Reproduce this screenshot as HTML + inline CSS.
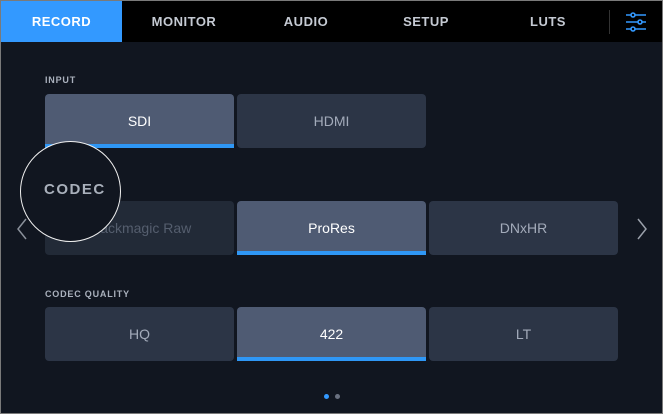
<!DOCTYPE html>
<html><head><style>
*{margin:0;padding:0;box-sizing:border-box}
body{width:663px;height:414px;background:#7a7a7a;font-family:"Liberation Sans",sans-serif;overflow:hidden;position:relative}
.scr{position:absolute;left:1px;top:1px;width:661px;height:412px;background:#111620;overflow:hidden}
.tabs{position:absolute;left:0;top:0;width:661px;height:41px;background:#000}
.tab{position:absolute;top:0;height:41px;line-height:42px;text-align:center;color:#c5cad3;font-size:13px;font-weight:bold;letter-spacing:0.5px}
.lbl{position:absolute;left:44px;color:#aab1bd;font-size:9px;font-weight:bold;letter-spacing:0.8px}
.b{position:absolute;height:54px;background:#2c3546;color:#a3abba;font-size:14px;text-align:center;line-height:54px;border-radius:4px}
.s{background:#4f5b73;color:#fff;border-radius:4px 4px 0 0}
.s:after{content:"";position:absolute;left:0;right:0;bottom:0;height:4px;background:#2f97f5}
</style></head><body><div class="scr">
<div class="tabs">
<div class="tab" style="left:0;width:121px;background:#3399ff;color:#fff">RECORD</div>
<div class="tab" style="left:122px;width:122px">MONITOR</div>
<div class="tab" style="left:244px;width:122px">AUDIO</div>
<div class="tab" style="left:364px;width:122px">SETUP</div>
<div class="tab" style="left:486px;width:122px">LUTS</div>
<div style="position:absolute;left:608px;top:9px;width:1px;height:24px;background:#333"></div>
<svg style="position:absolute;left:624px;top:10px" width="22" height="22" viewBox="0 0 22 22" fill="none" stroke="#3399ff" stroke-width="1.6"><path d="M1 4H21M1 11H21M1 18H21"/><circle cx="8" cy="4" r="2" fill="#000"/><circle cx="15" cy="11" r="2" fill="#000"/><circle cx="8" cy="18" r="2" fill="#000"/></svg>
</div>
<div class="lbl" style="top:74px">INPUT</div>
<div class="b s" style="left:44px;top:93px;width:189px">SDI</div>
<div class="b" style="left:236px;top:93px;width:189px">HDMI</div>
<div class="b" style="left:44px;top:200px;width:189px;background:#222a37;color:#555e6e">Blackmagic Raw</div>
<div class="b s" style="left:236px;top:200px;width:189px">ProRes</div>
<div class="b" style="left:428px;top:200px;width:189px">DNxHR</div>
<div class="lbl" style="top:288px">CODEC QUALITY</div>
<div class="b" style="left:44px;top:306px;width:189px">HQ</div>
<div class="b s" style="left:236px;top:306px;width:189px">422</div>
<div class="b" style="left:428px;top:306px;width:189px">LT</div>
<div style="position:absolute;left:19px;top:140px;width:101px;height:101px;border-radius:50%;border:1.5px solid #f0f0f0;background:#111620"></div>
<div style="position:absolute;left:43px;top:180px;color:#a9b0bb;font-size:15px;font-weight:bold;letter-spacing:1.5px">CODEC</div>
<svg style="position:absolute;left:14px;top:216px" width="14" height="24" viewBox="0 0 14 24" fill="none" stroke="#8a909a" stroke-width="1.5"><path d="M11 2L3 12L11 22"/></svg>
<svg style="position:absolute;left:634px;top:216px" width="14" height="24" viewBox="0 0 14 24" fill="none" stroke="#9aa0aa" stroke-width="1.5"><path d="M3 2L11 12L3 22"/></svg>
<div style="position:absolute;left:323px;top:393px;width:5px;height:5px;border-radius:50%;background:#3399ff"></div>
<div style="position:absolute;left:334px;top:393px;width:5px;height:5px;border-radius:50%;background:#6a7180"></div>
</div></body></html>
